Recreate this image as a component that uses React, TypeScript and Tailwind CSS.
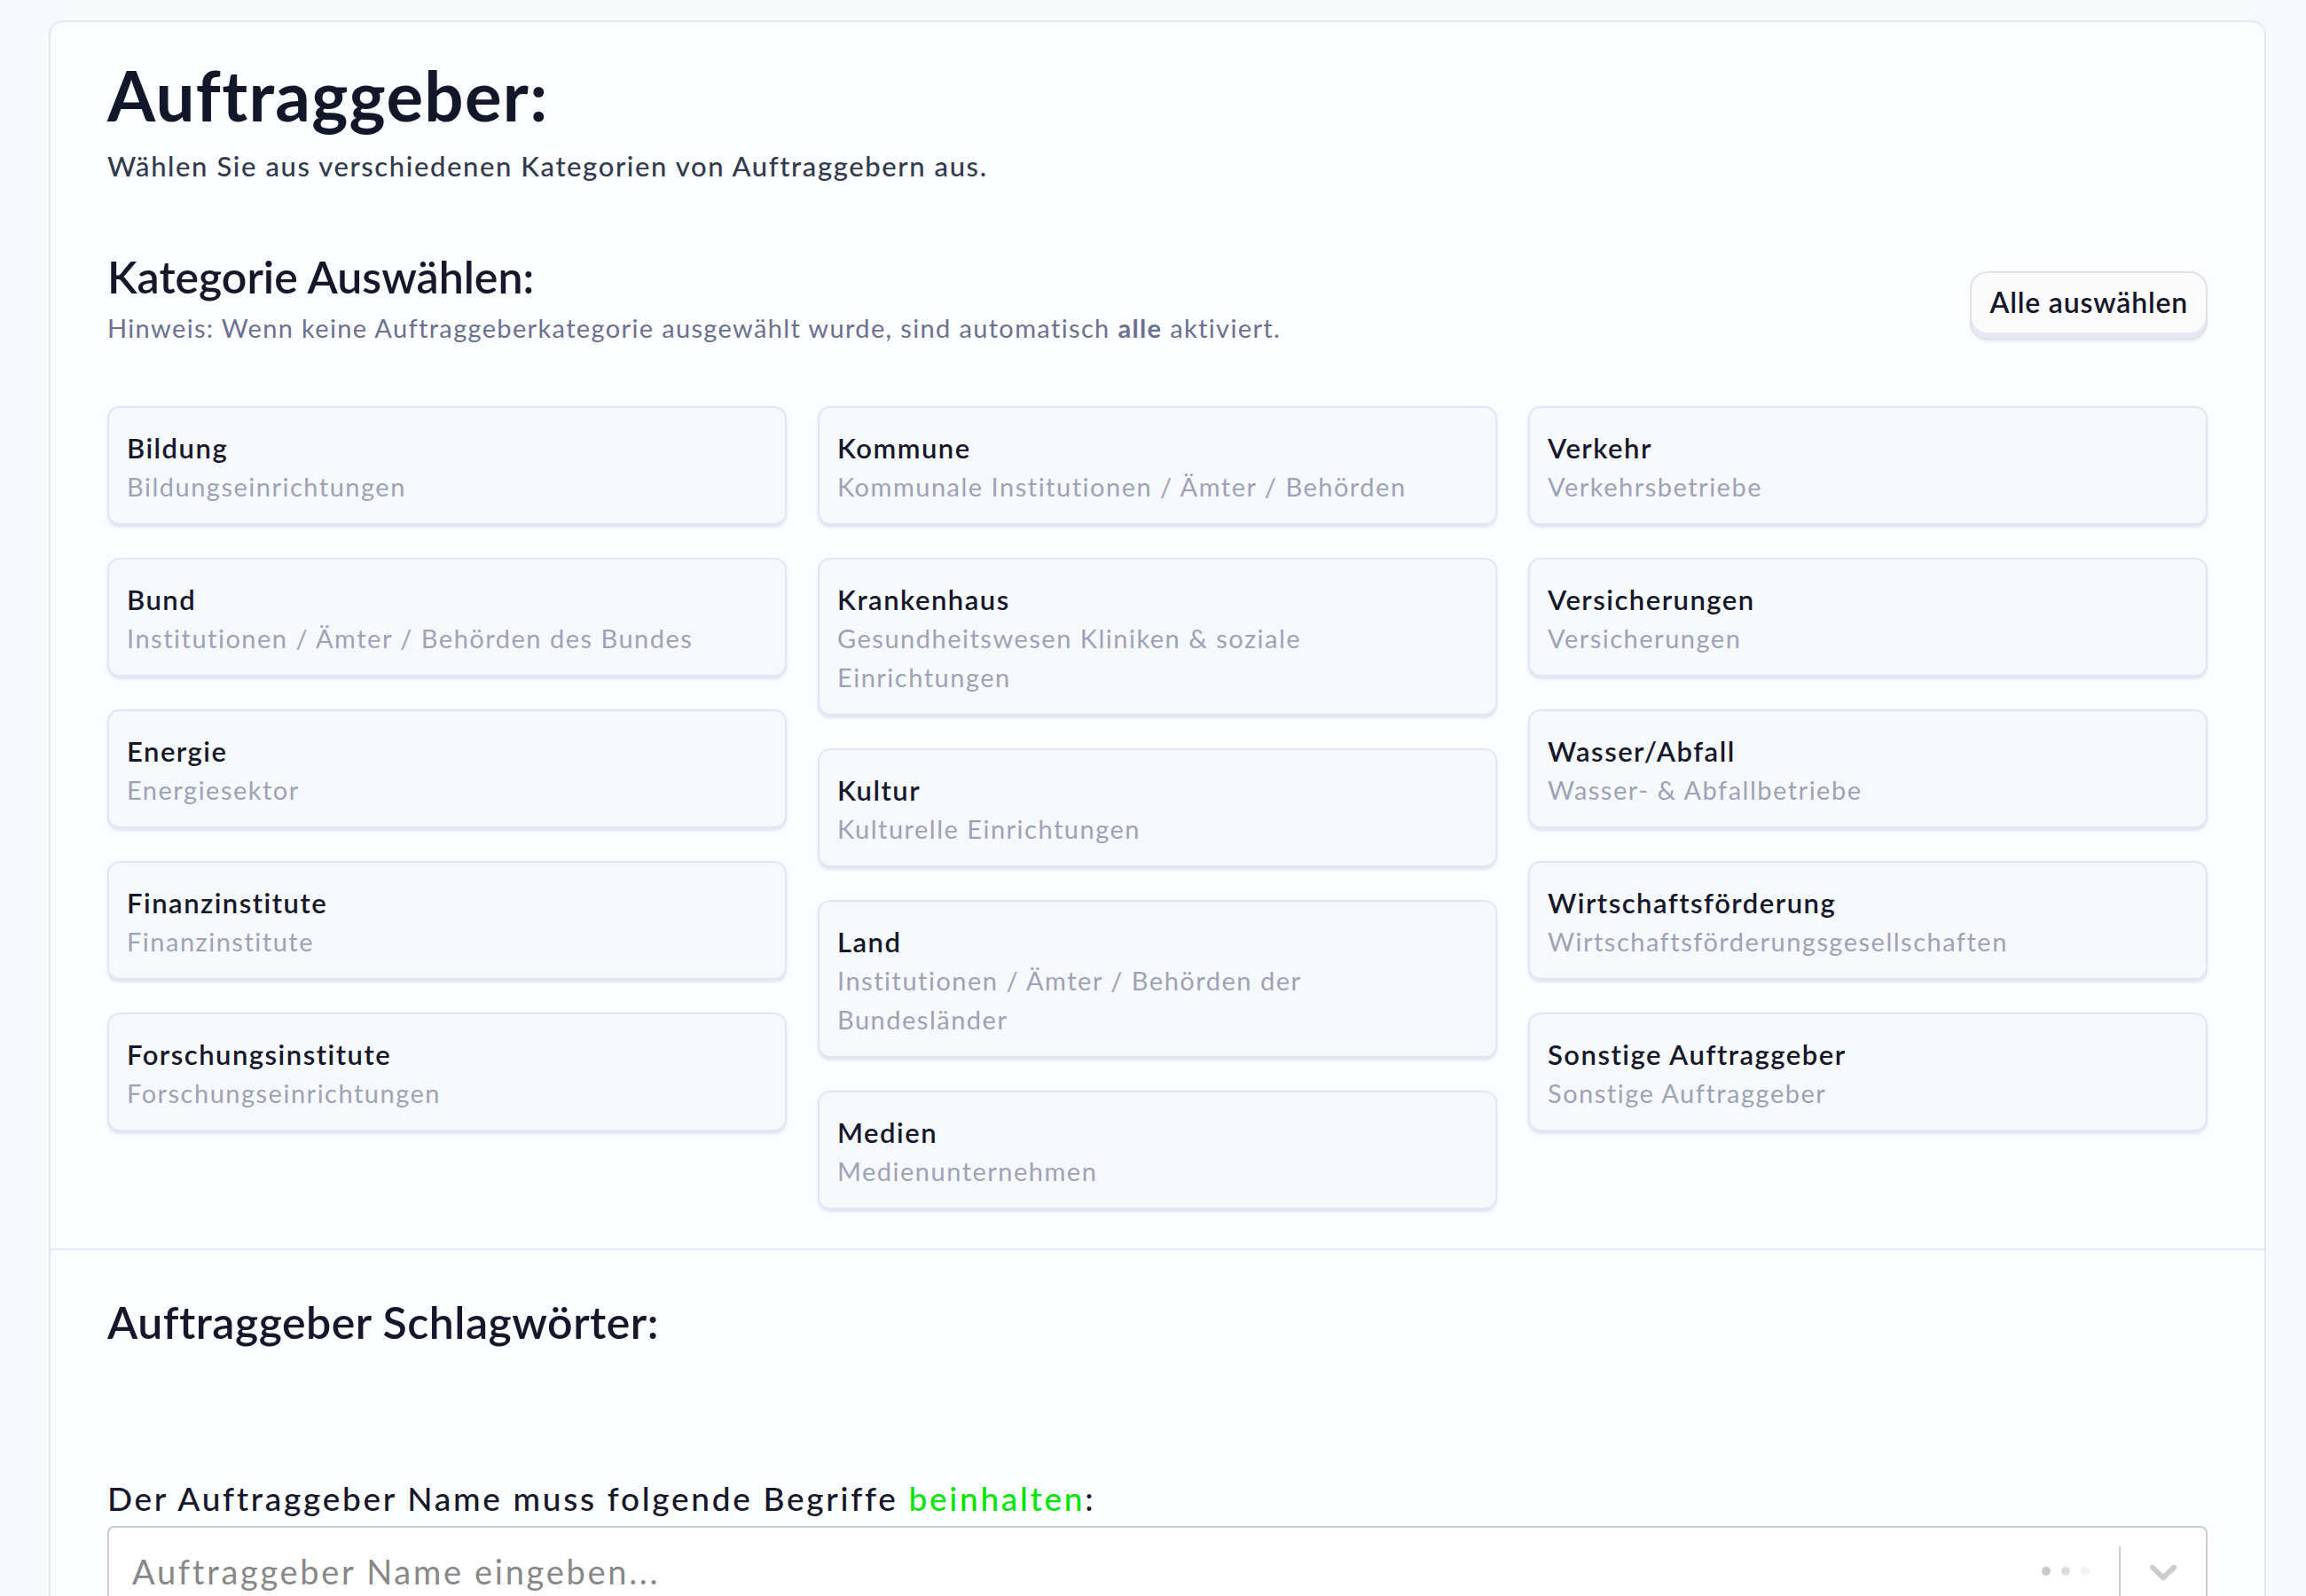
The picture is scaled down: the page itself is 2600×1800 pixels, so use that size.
import React from "react";

type Category = { title: string; desc: string };

const columns: Category[][] = [
  [
    { title: "Bildung", desc: "Bildungseinrichtungen" },
    { title: "Bund", desc: "Institutionen / Ämter / Behörden des Bundes" },
    { title: "Energie", desc: "Energiesektor" },
    { title: "Finanzinstitute", desc: "Finanzinstitute" },
    { title: "Forschungsinstitute", desc: "Forschungseinrichtungen" },
  ],
  [
    { title: "Kommune", desc: "Kommunale Institutionen / Ämter / Behörden" },
    { title: "Krankenhaus", desc: "Gesundheitswesen Kliniken & soziale\nEinrichtungen" },
    { title: "Kultur", desc: "Kulturelle Einrichtungen" },
    { title: "Land", desc: "Institutionen / Ämter / Behörden der\nBundesländer" },
    { title: "Medien", desc: "Medienunternehmen" },
  ],
  [
    { title: "Verkehr", desc: "Verkehrsbetriebe" },
    { title: "Versicherungen", desc: "Versicherungen" },
    { title: "Wasser/Abfall", desc: "Wasser- & Abfallbetriebe" },
    { title: "Wirtschaftsförderung", desc: "Wirtschaftsförderungsgesellschaften" },
    { title: "Sonstige Auftraggeber", desc: "Sonstige Auftraggeber" },
  ],
];

function CategoryCard({ item }: { item: Category }) {
  return (
    <button
      type="button"
      className="w-full text-left rounded-[14px] border-[2.5px] border-[#e3e5f5] bg-[#f6f9fc] px-[20px] pt-[23px] pb-[19px] shadow-[0_3px_3px_rgba(205,208,232,0.55)]"
    >
      <div className="text-[31px] leading-[44px] font-semibold tracking-[1.5px] text-[#16172b]">{item.title}</div>
      <div className="text-[29px] leading-[44px] tracking-[1.5px] text-[#9ea2b6] whitespace-pre-line">{item.desc}</div>
    </button>
  );
}

export default function App() {
  return (
    <div className="min-h-screen bg-[#f7fafb] pt-[23px] font-['Lato','Noto_Sans',sans-serif]">
      <div className="ml-[55px] w-[2500px] rounded-[16px] border-[2.5px] border-[#e4e6f6] bg-[#fbfdfe]">
        {/* Kategorien */}
        <div className="px-[64px] pt-[35px] pb-[44px]">
          <h1 className="text-[78px] leading-[94px] font-bold tracking-[1.3px] text-[#121729]">Auftraggeber:</h1>
          <p className="mt-[15px] text-[31px] leading-[36px] font-medium tracking-[1.6px] text-[#323a4d]">
            Wählen Sie aus verschiedenen Kategorien von Auftraggebern aus.
          </p>

          <div className="mt-[77px] flex items-center justify-between">
            <div>
              <h2 className="text-[50px] leading-[60px] font-semibold text-[#16172b]">Kategorie Auswählen:</h2>
              <p className="mt-[6px] text-[29px] leading-[44px] tracking-[1.35px] text-[#6c7090]">
                Hinweis: Wenn keine Auftraggeberkategorie ausgewählt wurde, sind automatisch{" "}
                <span className="font-bold">alle</span> aktiviert.
              </p>
            </div>
            <button
              type="button"
              className="mt-[14px] h-[77px] rounded-[20px] border-2 border-[#e0e1e7] bg-[#fbfbfc] px-[20px] pb-[6px] text-[32px] font-semibold tracking-[0.8px] text-[#16162a] shadow-[inset_0_-6px_0_#e7e8f6,0_2px_3px_rgba(0,0,0,0.08)]"
            >
              Alle auswählen
            </button>
          </div>

          <div className="mt-[66px] grid grid-cols-3 gap-x-[35px] items-start">
            {columns.map((col, i) => (
              <div key={i} className="flex flex-col gap-[37px]">
                {col.map((item) => (
                  <CategoryCard key={item.title} item={item} />
                ))}
              </div>
            ))}
          </div>
        </div>

        {/* Schlagwörter */}
        <div className="border-t-2 border-[#e6e8f5] px-[64px] pt-[51px] pb-[60px]">
          <h2 className="text-[50px] leading-[60px] font-semibold tracking-[0.5px] text-[#16172b]">
            Auftraggeber Schlagwörter:
          </h2>

          <label className="mt-[147px] block text-[37px] leading-[44px] font-medium tracking-[2.7px] text-[#16172b]">
            Der Auftraggeber Name muss folgende Begriffe{" "}
            <span className="text-[#00e600]">beinhalten</span>:
          </label>

          <div className="mt-[9px] flex h-[102px] items-center rounded-[8px] border-2 border-[#cccccc] bg-white">
            <div className="flex-1 pl-[26px] text-[38px] tracking-[2.7px] text-[#888888]">Auftraggeber Name eingeben...</div>
            <div className="flex items-center gap-[12px] pr-[33px]">
              <span className="h-[10px] w-[10px] rounded-full bg-[#c9c9c9]" />
              <span className="h-[10px] w-[10px] rounded-full bg-[#dcdcdc]" />
              <span className="h-[10px] w-[10px] rounded-full bg-[#f2f2f2]" />
            </div>
            <div className="h-[56px] w-[2px] self-center bg-[#cccccc]" />
            <div className="px-[22px]">
              <svg width="52" height="52" viewBox="0 0 20 20" fill="#cccccc" aria-hidden="true">
                <path d="M4.516 7.548c0.436-0.446 1.043-0.481 1.576 0l3.908 3.747 3.908-3.747c0.533-0.481 1.141-0.446 1.574 0 0.436 0.445 0.408 1.197 0 1.615-0.406 0.418-4.695 4.502-4.695 4.502-0.217 0.223-0.502 0.335-0.787 0.335s-0.57-0.112-0.789-0.335c0 0-4.287-4.084-4.695-4.502s-0.436-1.17 0-1.615z" />
              </svg>
            </div>
          </div>
        </div>
      </div>
    </div>
  );
}
